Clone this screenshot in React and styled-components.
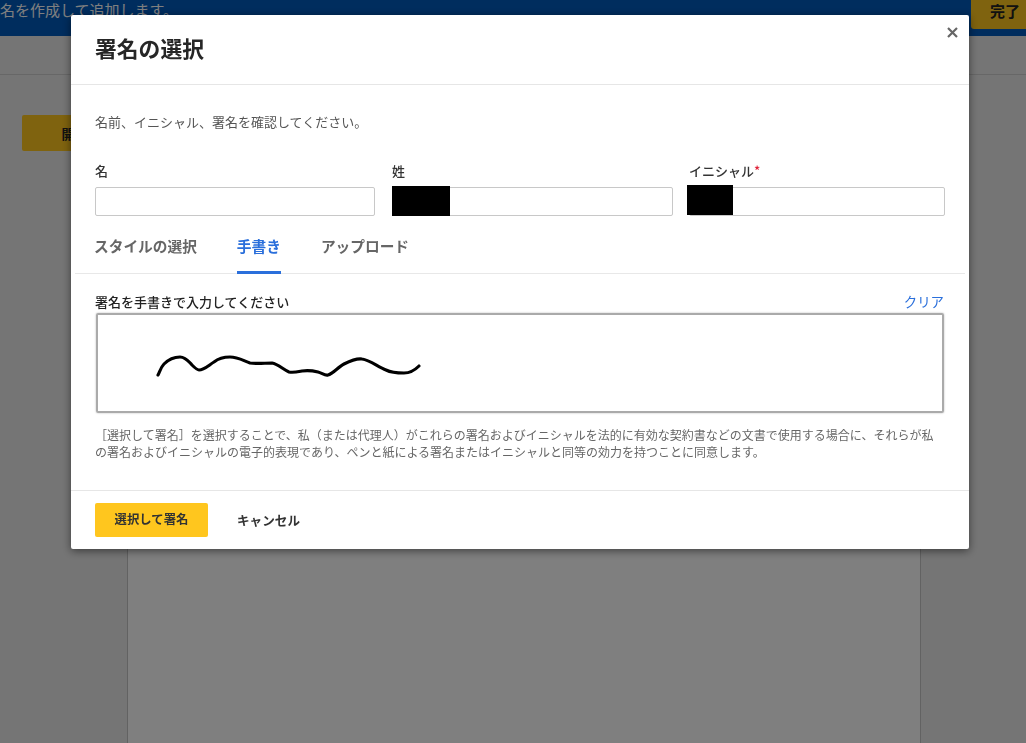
import React from 'react'
import styled, { createGlobalStyle } from 'styled-components'

const GlobalStyle = createGlobalStyle`
    html, body {
        margin:0;
        height:100%;
        overflow:hidden;
        font-family:"Noto Sans CJK JP", "Noto Sans", sans-serif;
    }
    * { box-sizing:border-box; }
`

const Page = styled.div`
    display:flex;
    flex-direction:column;
    height:743px;
    background:#eaeaea;
`

const TopBar = styled.div`
    display:flex;
    justify-content:space-between;
    height:36px;
    background:#005abc;
    flex-shrink:0;
`

const TopText = styled.span`
    font-size:15px;
    line-height:20px;
    color:#fff;
`

const DoneButton = styled.button`
    width:55px;
    height:29px;
    padding:0 0 8px 19px;
    border:none;
    border-radius:0 0 0 3px;
    background:#ffc61e;
    color:#222;
    font:700 15px "Noto Sans CJK JP", sans-serif;
    text-align:left;
    white-space:nowrap;
`

const Toolbar = styled.div`
    height:39px;
    border-bottom:1px solid #cfcfcf;
    flex-shrink:0;
`

const Workspace = styled.div`
    flex:1;
    display:flex;
    padding-left:22px;
`

const SideColumn = styled.div`
    width:105px;
    padding-top:40px;
`

const StartButton = styled.button`
    width:105px;
    height:36px;
    border:none;
    border-radius:2px;
    background:#ffc61e;
    color:#222;
    font:700 13px "Noto Sans CJK JP", sans-serif;
`

const DocumentSheet = styled.div`
    width:794px;
    background:#fff;
    border-left:1px solid #c4c4c4;
    border-right:1px solid #c4c4c4;
`

const Overlay = styled.div`
    position:fixed;
    inset:0;
    padding:15px 0 0 71px;
    background:rgba(0,0,0,.5);
`

const Modal = styled.div`
    position:relative;
    width:898px;
    height:534px;
    display:flex;
    flex-direction:column;
    background:#fff;
    border-radius:2px;
    box-shadow:0 2px 8px rgba(0,0,0,.5);
`

const ModalHeader = styled.div`
    height:70px;
    padding:0 24px;
    display:flex;
    align-items:center;
    border-bottom:1px solid #e6e6e6;
    flex-shrink:0;
`

const Title = styled.h2`
    margin:0 0 5px;
    font-size:21.8px;
    font-weight:700;
    color:#262626;
`

const CloseButton = styled.button`
    position:absolute;
    top:8px;
    right:8px;
    width:18px;
    height:18px;
    padding:0;
    border:none;
    background:none;
    display:flex;
    align-items:center;
    justify-content:center;
`

const ModalBody = styled.div`
    flex:1;
    padding:27px 24px 0;
`

const Description = styled.p`
    margin:0;
    font-size:13px;
    line-height:20px;
    color:#555;
`

const NameRow = styled.div`
    display:flex;
    margin-top:29px;
`

const Field = styled.div`
    position:relative;
    width:${p => p.$width}px;
    margin-right:${p => p.$gap || 0}px;
    flex-shrink:0;
`

const FieldLabel = styled.label`
    display:block;
    height:20px;
    margin-bottom:6px;
    font-size:13px;
    line-height:20px;
    font-weight:500;
    color:#333;
`

const Required = styled.span`
    color:#e0243a;
`

const TextInput = styled.input`
    display:block;
    width:100%;
    height:29px;
    padding:0 8px;
    border:1px solid #c8c8c8;
    border-radius:2px;
    background:#fff;
`

const Redaction = styled.div`
    position:absolute;
    left:${p => p.$left}px;
    bottom:${p => p.$bottom}px;
    width:${p => p.$width}px;
    height:30px;
    background:#000;
`

const TabBar = styled.div`
    display:flex;
    gap:40px;
    height:58px;
    margin:0 -20px;
    padding:16px 0 0 19px;
    border-bottom:1px solid #e8e8e8;
`

const Tab = styled.div`
    height:42px;
    font-size:14.7px;
    line-height:28px;
    font-weight:700;
    white-space:nowrap;
    color:${p => (p.$active ? '#2a6fdb' : '#666')};
    border-bottom:${p => (p.$active ? '3px solid #2a6fdb' : 'none')};
`

const PadHeader = styled.div`
    display:flex;
    justify-content:space-between;
    align-items:center;
    height:20px;
    margin:17px 0 2px;
`

const PadLabel = styled.span`
    font-size:13px;
    font-weight:500;
    color:#222;
`

const ClearLink = styled.a`
    margin-right:1px;
    font-size:13.4px;
    color:#2a6fdb;
`

const SignaturePad = styled.div`
    height:100px;
    margin:0 1px;
    border:2px solid #aaa;
    border-radius:2px;
    box-shadow:0 0 2px rgba(0,0,0,.3);
`

const SignatureSvg = styled.svg`
    display:block;
    width:100%;
    height:100%;
`

const Legal = styled.p`
    margin:13px 0 0;
    font-size:12px;
    line-height:17px;
    color:#666;
`

const ModalFooter = styled.div`
    height:59px;
    padding:12px 24px 0;
    display:flex;
    gap:29px;
    align-items:flex-start;
    border-top:1px solid #e6e6e6;
    flex-shrink:0;
`

const PrimaryButton = styled.button`
    width:113px;
    height:34px;
    padding:0 0 2px;
    border:none;
    border-radius:2px;
    background:#ffc61e;
    color:#333;
    font:700 12.4px "Noto Sans CJK JP", sans-serif;
`

const CancelButton = styled.button`
    height:34px;
    padding:0 0 2px;
    border:none;
    background:none;
    color:#333;
    font:700 12.6px "Noto Sans CJK JP", sans-serif;
`

const signaturePath =
    'M60 60 C62 56 63 52 66 49 C70 45 75 42 82 42 C88 42 91 47 94 50 C97 53 99 55 101 55 C106 55 111 50 116 47 C121 43 126 42 132 42 C140 42 146 46 152 48 C159 49 167 48 174 48 C180 49 186 55 191 57 C195 58 199 57 204 56 C210 55 216 56 220 57 C224 58 227 61 230 60 C235 59 240 52 246 49 C252 46 258 43 264 44 C272 45 280 52 288 55 C294 58 300 58 306 58 C312 58 317 55 321 51'

const App = () => {
    return (
        <>
            <GlobalStyle/>
            <Page>
                <TopBar>
                    <TopText>名を作成して追加します。</TopText>
                    <DoneButton>完了</DoneButton>
                </TopBar>
                <Toolbar/>
                <Workspace>
                    <SideColumn>
                        <StartButton>開始</StartButton>
                    </SideColumn>
                    <DocumentSheet/>
                </Workspace>
            </Page>
            <Overlay>
                <Modal>
                    <ModalHeader>
                        <Title>署名の選択</Title>
                    </ModalHeader>
                    <CloseButton aria-label="閉じる">
                        <svg width="11" height="11" viewBox="0 0 11 11">
                            <path d="M1 1 L10 10 M10 1 L1 10" stroke="#666" strokeWidth="2.2" />
                        </svg>
                    </CloseButton>
                    <ModalBody>
                        <Description>名前、イニシャル、署名を確認してください。</Description>
                        <NameRow>
                            <Field $width={280} $gap={17}>
                                <FieldLabel>名</FieldLabel>
                                <TextInput />
                            </Field>
                            <Field $width={281} $gap={16}>
                                <FieldLabel>姓</FieldLabel>
                                <TextInput />
                                <Redaction $left={0} $bottom={0} $width={58} />
                            </Field>
                            <Field $width={256}>
                                <FieldLabel>イニシャル<Required>*</Required></FieldLabel>
                                <TextInput />
                                <Redaction $left={-2} $bottom={1} $width={46} />
                            </Field>
                        </NameRow>
                        <TabBar>
                            <Tab>スタイルの選択</Tab>
                            <Tab $active>手書き</Tab>
                            <Tab>アップロード</Tab>
                        </TabBar>
                        <PadHeader>
                            <PadLabel>署名を手書きで入力してください</PadLabel>
                            <ClearLink>クリア</ClearLink>
                        </PadHeader>
                        <SignaturePad>
                            <SignatureSvg viewBox="0 0 844 96">
                                <path d={signaturePath} fill="none" stroke="#000" strokeWidth="3.1" strokeLinecap="round" strokeLinejoin="round" />
                            </SignatureSvg>
                        </SignaturePad>
                        <Legal>
                            ［選択して署名］を選択することで、私（または代理人）がこれらの署名およびイニシャルを法的に有効な契約書などの文書で使用する場合に、それらが私の署名およびイニシャルの電子的表現であり、ペンと紙による署名またはイニシャルと同等の効力を持つことに同意します。
                        </Legal>
                    </ModalBody>
                    <ModalFooter>
                        <PrimaryButton>選択して署名</PrimaryButton>
                        <CancelButton>キャンセル</CancelButton>
                    </ModalFooter>
                </Modal>
            </Overlay>
        </>
    )
}

export default App
